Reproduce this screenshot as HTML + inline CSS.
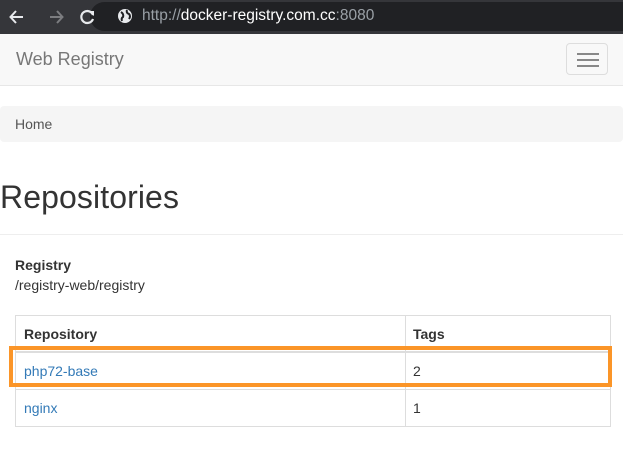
<!DOCTYPE html>
<html><head><style>
body{margin:0;width:623px;height:455px;overflow:hidden;background:#fff;font-family:"Liberation Sans",Arial,sans-serif;position:relative;color:#333}
.abs{position:absolute}
</style></head><body>
<div class="abs" style="left:0;top:0;width:623px;height:34px;background:#35363a"></div>
<div class="abs" style="left:90px;top:2px;width:560px;height:29px;background:#202124;border-radius:15px"></div>
<svg class="abs" style="left:8px;top:7px" width="90" height="20" viewBox="0 0 90 20">
<path d="M15 10H3M8 4L2.5 10L8 16" stroke="#e8eaed" stroke-width="2" fill="none"/>
<path d="M42 10H54M49 4L54.5 10L49 16" stroke="#7c7d80" stroke-width="2" fill="none"/>
<path d="M85 8A6 6 0 1 0 85 12" stroke="#e8eaed" stroke-width="2.2" fill="none"/>
<path d="M80 4L86 4L86 9Z" fill="#e8eaed"/>
</svg>
<svg class="abs" style="left:117px;top:8px" width="16" height="16" viewBox="0 0 16 16"><circle cx="8" cy="8" r="7" fill="#e8eaed"/><path d="M4 4Q7 6 6 9Q4 10 5 13M10 2Q9 5 12 6Q14 8 12 11" stroke="#202124" stroke-width="2" fill="none"/></svg>
<div class="abs" style="left:142px;top:7px;font-size:15.5px;color:#9aa0a6">http://<span style="color:#fff">docker-registry.com.cc</span>:8080</div>
<div class="abs" style="left:0;top:34px;width:623px;height:51px;background:#f8f8f8;border-bottom:1px solid #e7e7e7"></div>
<div class="abs" style="left:16px;top:49px;font-size:18px;color:#777">Web Registry</div>
<div class="abs" style="left:566px;top:43px;width:42px;height:32px;border:1px solid #ddd;border-radius:4px;box-sizing:border-box"></div>
<div class="abs" style="left:577px;top:53px;width:22px;height:2px;background:#888;box-shadow:0 6px #888,0 12px #888"></div>
<div class="abs" style="left:0;top:106px;width:623px;height:36px;background:#f5f5f5;border-radius:4px"></div>
<div class="abs" style="left:15px;top:116px;font-size:14px;color:#555">Home</div>
<div class="abs" style="left:0px;top:179px;font-size:32px;color:#333;letter-spacing:0.1px">Repositories</div>
<div class="abs" style="left:0;top:234px;width:623px;height:1px;background:#eee"></div>
<div class="abs" style="left:15px;top:257px;font-size:14px;font-weight:bold">Registry</div>
<div class="abs" style="left:15px;top:277px;font-size:14px">/registry-web/registry</div>
<div class="abs" style="left:15px;top:315px;width:596px;height:112px;border:1px solid #ddd;box-sizing:border-box"></div>
<div class="abs" style="left:16px;top:351px;width:594px;height:2px;background:#ddd"></div>
<div class="abs" style="left:16px;top:389px;width:594px;height:1px;background:#ddd"></div>
<div class="abs" style="left:405px;top:316px;width:1px;height:110px;background:#ddd"></div>
<div class="abs" style="left:24px;top:326px;font-size:14px;font-weight:bold">Repository</div>
<div class="abs" style="left:413px;top:326px;font-size:14px;font-weight:bold">Tags</div>
<div class="abs" style="left:24px;top:363px;font-size:14px;color:#337ab7">php72-base</div>
<div class="abs" style="left:413px;top:363px;font-size:14px">2</div>
<div class="abs" style="left:24px;top:400px;font-size:14px;color:#337ab7">nginx</div>
<div class="abs" style="left:413px;top:400px;font-size:14px">1</div>
<div class="abs" style="left:9px;top:346px;width:603px;height:41px;border:4px solid #fb9528;box-sizing:border-box"></div>
</body></html>
